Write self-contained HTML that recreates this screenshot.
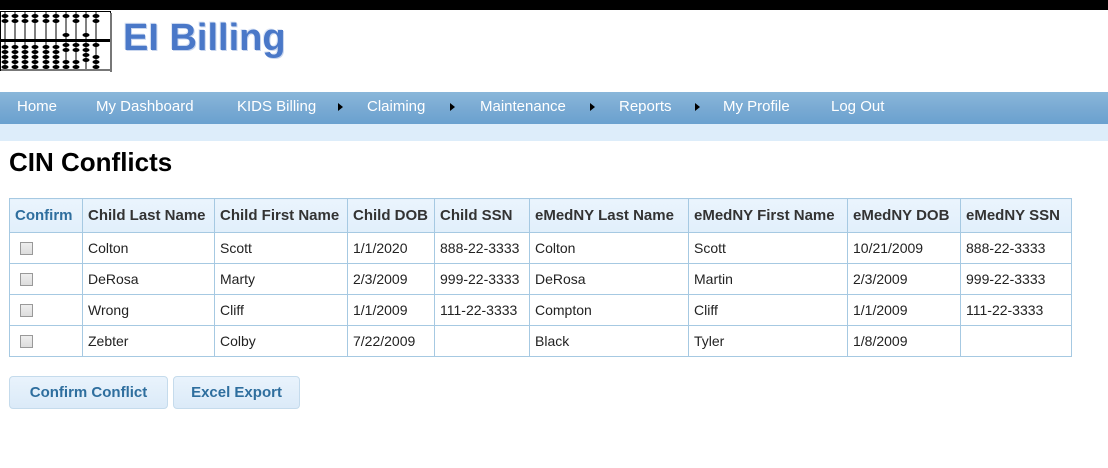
<!DOCTYPE html>
<html><head><meta charset="utf-8"><style>
body{margin:0;width:1108px;height:468px;background:#fff;font-family:"Liberation Sans",sans-serif;position:relative;overflow:hidden}
.top{position:absolute;left:0;top:0;width:1108px;height:10px;background:#000}
.logo{position:absolute;left:0;top:11px}
.brand{position:absolute;left:123px;top:17px;font-size:38px;font-weight:bold;color:#4a78c8;letter-spacing:0px;text-shadow:1px 1px 0 #c9d6ee,-1px -1px 0 #dfe7f6}
.nav{position:absolute;left:0;top:92px;width:1108px;height:32px;background:linear-gradient(#8ab7da,#7aaad3 50%,#6aa1cf)}
.band{position:absolute;left:0;top:124px;width:1108px;height:17px;background:#ddedfa}
.nav span{position:absolute;top:6px;color:#fff;font-size:15px}
.nav i{position:absolute;top:11px;width:0;height:0;border-left:5px solid #000;border-top:4px solid transparent;border-bottom:4px solid transparent}
h1{position:absolute;left:9px;top:147px;margin:0;font-size:26px;font-weight:bold;color:#000}
table{position:absolute;left:9px;top:198px;border-collapse:collapse;table-layout:fixed;font-size:14px;color:#222}
td,th{border:1px solid #a6c9e2;padding:0 5px;text-align:left;white-space:nowrap;overflow:hidden}
th{height:33px;background:linear-gradient(#eaf4fd,#e1effb);font-weight:bold;color:#333;font-size:15px}
th.c{color:#2e6e9e}
td{height:30px;background:#fff}
.cb{display:inline-block;width:11px;height:11px;border:1px solid #999;background:linear-gradient(#eee,#ddd);margin-left:5px;margin-top:-2px;vertical-align:middle}
.btn{position:absolute;top:376px;height:31px;border:1px solid #c5dbec;border-radius:4px;background:linear-gradient(#e9f3fc,#dbeaf8);color:#2e6e9e;font-weight:bold;font-size:15px;line-height:31px;text-align:center}
</style></head><body>
<div class="top"></div>
<svg class="logo" width="112" height="62" viewBox="0 0 112 62">
<rect x="0.5" y="0.5" width="110" height="59" fill="#fff" stroke="#000"/>
<rect x="110" y="2" width="2" height="59" fill="#777"/>
<rect x="1" y="58" width="111" height="2" fill="#777"/>
<rect x="1" y="28" width="109" height="3" fill="#000"/>
<g stroke="#000" stroke-width="1">
<line x1="5" y1="1" x2="5" y2="58"/><line x1="15" y1="1" x2="15" y2="58"/><line x1="25" y1="1" x2="25" y2="58"/><line x1="35" y1="1" x2="35" y2="58"/><line x1="46" y1="1" x2="46" y2="58"/><line x1="56" y1="1" x2="56" y2="58"/><line x1="66" y1="1" x2="66" y2="58"/><line x1="76" y1="1" x2="76" y2="58"/><line x1="86" y1="1" x2="86" y2="58"/><line x1="96" y1="1" x2="96" y2="58"/>
</g>
<g fill="#000">
<g id="up"><ellipse cx="5" cy="5" rx="3.5" ry="2"/><ellipse cx="5" cy="10" rx="3.5" ry="2"/></g>
<use href="#up" x="10"/><use href="#up" x="20"/><use href="#up" x="30"/><use href="#up" x="41"/><use href="#up" x="51"/>
<ellipse cx="66" cy="5" rx="3.5" ry="2"/><ellipse cx="66" cy="24" rx="3.5" ry="2"/>
<ellipse cx="76" cy="5" rx="3.5" ry="2"/><ellipse cx="76" cy="10" rx="3.5" ry="2"/>
<ellipse cx="86" cy="5" rx="3.5" ry="2"/><ellipse cx="86" cy="24" rx="3.5" ry="2"/>
<ellipse cx="96" cy="5" rx="3.5" ry="2"/><ellipse cx="96" cy="10" rx="3.5" ry="2"/>
<g id="lo"><ellipse cx="5" cy="36" rx="3.5" ry="2"/><ellipse cx="5" cy="41" rx="3.5" ry="2"/><ellipse cx="5" cy="46" rx="3.5" ry="2"/><ellipse cx="5" cy="51" rx="3.5" ry="2"/><ellipse cx="5" cy="56" rx="3.5" ry="2"/></g>
<use href="#lo" x="10"/><use href="#lo" x="20"/><use href="#lo" x="30"/><use href="#lo" x="41"/><use href="#lo" x="51"/>
<ellipse cx="66" cy="34" rx="3.5" ry="2"/><ellipse cx="66" cy="39" rx="3.5" ry="2"/><ellipse cx="66" cy="51" rx="3.5" ry="2"/><ellipse cx="66" cy="56" rx="3.5" ry="2"/>
<ellipse cx="76" cy="34" rx="3.5" ry="2"/><ellipse cx="76" cy="39" rx="3.5" ry="2"/><ellipse cx="76" cy="51" rx="3.5" ry="2"/><ellipse cx="76" cy="56" rx="3.5" ry="2"/>
<ellipse cx="86" cy="34" rx="3.5" ry="2"/><ellipse cx="86" cy="39" rx="3.5" ry="2"/><ellipse cx="86" cy="44" rx="3.5" ry="2"/><ellipse cx="86" cy="49" rx="3.5" ry="2"/>
<ellipse cx="96" cy="34" rx="3.5" ry="2"/><ellipse cx="96" cy="46" rx="3.5" ry="2"/><ellipse cx="96" cy="51" rx="3.5" ry="2"/><ellipse cx="96" cy="56" rx="3.5" ry="2"/>
</g>
</svg>
<div class="brand">EI Billing</div>
<div class="nav">
<span style="left:17px">Home</span>
<span style="left:96px">My Dashboard</span>
<span style="left:237px">KIDS Billing</span><i style="left:338px"></i>
<span style="left:367px">Claiming</span><i style="left:450px"></i>
<span style="left:480px">Maintenance</span><i style="left:590px"></i>
<span style="left:619px">Reports</span><i style="left:695px"></i>
<span style="left:723px">My Profile</span>
<span style="left:831px">Log Out</span>
</div>
<div class="band"></div>
<h1>CIN Conflicts</h1>
<table>
<colgroup><col style="width:73px"><col style="width:132px"><col style="width:133px"><col style="width:87px"><col style="width:95px"><col style="width:159px"><col style="width:159px"><col style="width:113px"><col style="width:111px"></colgroup>
<tr><th class="c">Confirm</th><th>Child Last Name</th><th>Child First Name</th><th>Child DOB</th><th>Child SSN</th><th>eMedNY Last Name</th><th>eMedNY First Name</th><th>eMedNY DOB</th><th>eMedNY SSN</th></tr>
<tr><td><span class="cb"></span></td><td>Colton</td><td>Scott</td><td>1/1/2020</td><td>888-22-3333</td><td>Colton</td><td>Scott</td><td>10/21/2009</td><td>888-22-3333</td></tr>
<tr><td><span class="cb"></span></td><td>DeRosa</td><td>Marty</td><td>2/3/2009</td><td>999-22-3333</td><td>DeRosa</td><td>Martin</td><td>2/3/2009</td><td>999-22-3333</td></tr>
<tr><td><span class="cb"></span></td><td>Wrong</td><td>Cliff</td><td>1/1/2009</td><td>111-22-3333</td><td>Compton</td><td>Cliff</td><td>1/1/2009</td><td>111-22-3333</td></tr>
<tr><td><span class="cb"></span></td><td>Zebter</td><td>Colby</td><td>7/22/2009</td><td></td><td>Black</td><td>Tyler</td><td>1/8/2009</td><td></td></tr>
</table>
<div class="btn" style="left:9px;width:157px">Confirm Conflict</div>
<div class="btn" style="left:173px;width:125px">Excel Export</div>
</body></html>
